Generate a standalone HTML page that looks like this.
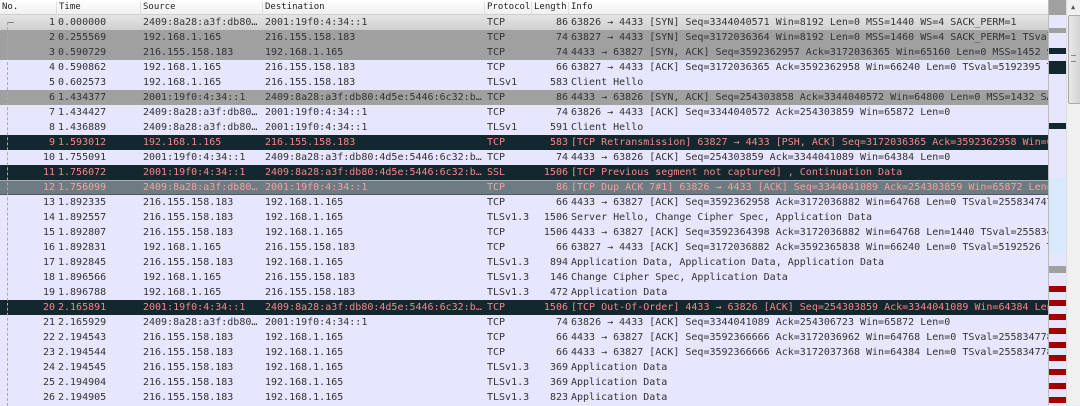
<!DOCTYPE html><html><head><style>
body{margin:0;width:1080px;height:405px;overflow:hidden;background:#e7e6ff;font-family:"DejaVu Sans Mono","Liberation Mono",monospace;font-size:10px;color:#333;position:relative}
.h{position:absolute;left:0;top:0;width:1048px;height:15px;background:linear-gradient(#fff,#f0f0f0);border-bottom:1px solid #d0d0d0;box-sizing:border-box;font-family:"DejaVu Sans Mono",monospace;font-size:9px;color:#222}
.h span{position:absolute;top:2px;border-left:1px solid #ddd;padding-left:2px;height:13px}
.r{position:absolute;left:0;width:1048px;height:15px;line-height:15px;white-space:pre;overflow:hidden}
.r span{position:absolute;top:0}
.n{right:993px;text-align:right}
.t{left:58px}.s{left:143px}.d{left:265px}.p{left:487px}.l{right:480px;text-align:right}.i{left:571px}
.g{background:#a0a0a0}.w{background:linear-gradient(#e4e4e4,#d0d0d0)}
.k{background:#12272e;color:#f78787}.m{background:#6c7c82;color:#f5a0a0;border-top:1px solid #aab;border-bottom:1px solid #556}
.mm{position:absolute;left:1048px;top:0;width:18px;height:405px;background:#e7e6ff;border-left:1px solid #bbb}
.mm div{position:absolute;left:0;width:18px}
.sb{position:absolute;left:1066px;top:0;width:14px;height:405px;background:#f0f0f0;border-left:1px solid #ddd}
</style></head><body>
<div class="h"><span style="left:0;border:0">No.</span><span style="left:56px">Time</span><span style="left:140px">Source</span><span style="left:262px">Destination</span><span style="left:484px">Protocol</span><span style="left:531px">Length</span><span style="left:568px">Info</span></div>
<div class="r w" style="top:15px"><span class="n">1</span><span class="t">0.000000</span><span class="s">2409:8a28:a3f:db80…</span><span class="d">2001:19f0:4:34::1</span><span class="p">TCP</span><span class="l">86</span><span class="i">63826 → 4433 [SYN] Seq=3344040571 Win=8192 Len=0 MSS=1440 WS=4 SACK_PERM=1</span></div>
<div class="r g" style="top:30px"><span class="n">2</span><span class="t">0.255569</span><span class="s">192.168.1.165</span><span class="d">216.155.158.183</span><span class="p">TCP</span><span class="l">74</span><span class="i">63827 → 4433 [SYN] Seq=3172036364 Win=8192 Len=0 MSS=1460 WS=4 SACK_PERM=1 TSval=</span></div>
<div class="r g" style="top:45px"><span class="n">3</span><span class="t">0.590729</span><span class="s">216.155.158.183</span><span class="d">192.168.1.165</span><span class="p">TCP</span><span class="l">74</span><span class="i">4433 → 63827 [SYN, ACK] Seq=3592362957 Ack=3172036365 Win=65160 Len=0 MSS=1452 SA</span></div>
<div class="r" style="top:60px"><span class="n">4</span><span class="t">0.590862</span><span class="s">192.168.1.165</span><span class="d">216.155.158.183</span><span class="p">TCP</span><span class="l">66</span><span class="i">63827 → 4433 [ACK] Seq=3172036365 Ack=3592362958 Win=66240 Len=0 TSval=5192395 TS</span></div>
<div class="r" style="top:75px"><span class="n">5</span><span class="t">0.602573</span><span class="s">192.168.1.165</span><span class="d">216.155.158.183</span><span class="p">TLSv1</span><span class="l">583</span><span class="i">Client Hello</span></div>
<div class="r g" style="top:90px"><span class="n">6</span><span class="t">1.434377</span><span class="s">2001:19f0:4:34::1</span><span class="d">2409:8a28:a3f:db80:4d5e:5446:6c32:b…</span><span class="p">TCP</span><span class="l">86</span><span class="i">4433 → 63826 [SYN, ACK] Seq=254303858 Ack=3344040572 Win=64800 Len=0 MSS=1432 SA</span></div>
<div class="r" style="top:105px"><span class="n">7</span><span class="t">1.434427</span><span class="s">2409:8a28:a3f:db80…</span><span class="d">2001:19f0:4:34::1</span><span class="p">TCP</span><span class="l">74</span><span class="i">63826 → 4433 [ACK] Seq=3344040572 Ack=254303859 Win=65872 Len=0</span></div>
<div class="r" style="top:120px"><span class="n">8</span><span class="t">1.436889</span><span class="s">2409:8a28:a3f:db80…</span><span class="d">2001:19f0:4:34::1</span><span class="p">TLSv1</span><span class="l">591</span><span class="i">Client Hello</span></div>
<div class="r k" style="top:135px"><span class="n">9</span><span class="t">1.593012</span><span class="s">192.168.1.165</span><span class="d">216.155.158.183</span><span class="p">TCP</span><span class="l">583</span><span class="i">[TCP Retransmission] 63827 → 4433 [PSH, ACK] Seq=3172036365 Ack=3592362958 Win=6</span></div>
<div class="r" style="top:150px"><span class="n">10</span><span class="t">1.755091</span><span class="s">2001:19f0:4:34::1</span><span class="d">2409:8a28:a3f:db80:4d5e:5446:6c32:b…</span><span class="p">TCP</span><span class="l">74</span><span class="i">4433 → 63826 [ACK] Seq=254303859 Ack=3344041089 Win=64384 Len=0</span></div>
<div class="r k" style="top:165px"><span class="n">11</span><span class="t">1.756072</span><span class="s">2001:19f0:4:34::1</span><span class="d">2409:8a28:a3f:db80:4d5e:5446:6c32:b…</span><span class="p">SSL</span><span class="l">1506</span><span class="i">[TCP Previous segment not captured] , Continuation Data</span></div>
<div class="r m" style="top:180px;height:13px;line-height:13px"><span class="n">12</span><span class="t">1.756099</span><span class="s">2409:8a28:a3f:db80…</span><span class="d">2001:19f0:4:34::1</span><span class="p">TCP</span><span class="l">86</span><span class="i">[TCP Dup ACK 7#1] 63826 → 4433 [ACK] Seq=3344041089 Ack=254303859 Win=65872 Len=</span></div>
<div class="r" style="top:195px"><span class="n">13</span><span class="t">1.892335</span><span class="s">216.155.158.183</span><span class="d">192.168.1.165</span><span class="p">TCP</span><span class="l">66</span><span class="i">4433 → 63827 [ACK] Seq=3592362958 Ack=3172036882 Win=64768 Len=0 TSval=255834747</span></div>
<div class="r" style="top:210px"><span class="n">14</span><span class="t">1.892557</span><span class="s">216.155.158.183</span><span class="d">192.168.1.165</span><span class="p">TLSv1.3</span><span class="l">1506</span><span class="i">Server Hello, Change Cipher Spec, Application Data</span></div>
<div class="r" style="top:225px"><span class="n">15</span><span class="t">1.892807</span><span class="s">216.155.158.183</span><span class="d">192.168.1.165</span><span class="p">TCP</span><span class="l">1506</span><span class="i">4433 → 63827 [ACK] Seq=3592364398 Ack=3172036882 Win=64768 Len=1440 TSval=255834</span></div>
<div class="r" style="top:240px"><span class="n">16</span><span class="t">1.892831</span><span class="s">192.168.1.165</span><span class="d">216.155.158.183</span><span class="p">TCP</span><span class="l">66</span><span class="i">63827 → 4433 [ACK] Seq=3172036882 Ack=3592365838 Win=66240 Len=0 TSval=5192526 T</span></div>
<div class="r" style="top:255px"><span class="n">17</span><span class="t">1.892845</span><span class="s">216.155.158.183</span><span class="d">192.168.1.165</span><span class="p">TLSv1.3</span><span class="l">894</span><span class="i">Application Data, Application Data, Application Data</span></div>
<div class="r" style="top:270px"><span class="n">18</span><span class="t">1.896566</span><span class="s">192.168.1.165</span><span class="d">216.155.158.183</span><span class="p">TLSv1.3</span><span class="l">146</span><span class="i">Change Cipher Spec, Application Data</span></div>
<div class="r" style="top:285px"><span class="n">19</span><span class="t">1.896788</span><span class="s">192.168.1.165</span><span class="d">216.155.158.183</span><span class="p">TLSv1.3</span><span class="l">472</span><span class="i">Application Data</span></div>
<div class="r k" style="top:300px"><span class="n">20</span><span class="t">2.165891</span><span class="s">2001:19f0:4:34::1</span><span class="d">2409:8a28:a3f:db80:4d5e:5446:6c32:b…</span><span class="p">TCP</span><span class="l">1506</span><span class="i">[TCP Out-Of-Order] 4433 → 63826 [ACK] Seq=254303859 Ack=3344041089 Win=64384 Len</span></div>
<div class="r" style="top:315px"><span class="n">21</span><span class="t">2.165929</span><span class="s">2409:8a28:a3f:db80…</span><span class="d">2001:19f0:4:34::1</span><span class="p">TCP</span><span class="l">74</span><span class="i">63826 → 4433 [ACK] Seq=3344041089 Ack=254306723 Win=65872 Len=0</span></div>
<div class="r" style="top:330px"><span class="n">22</span><span class="t">2.194543</span><span class="s">216.155.158.183</span><span class="d">192.168.1.165</span><span class="p">TCP</span><span class="l">66</span><span class="i">4433 → 63827 [ACK] Seq=3592366666 Ack=3172036962 Win=64768 Len=0 TSval=255834778</span></div>
<div class="r" style="top:345px"><span class="n">23</span><span class="t">2.194544</span><span class="s">216.155.158.183</span><span class="d">192.168.1.165</span><span class="p">TCP</span><span class="l">66</span><span class="i">4433 → 63827 [ACK] Seq=3592366666 Ack=3172037368 Win=64384 Len=0 TSval=255834778</span></div>
<div class="r" style="top:360px"><span class="n">24</span><span class="t">2.194545</span><span class="s">216.155.158.183</span><span class="d">192.168.1.165</span><span class="p">TLSv1.3</span><span class="l">369</span><span class="i">Application Data</span></div>
<div class="r" style="top:375px"><span class="n">25</span><span class="t">2.194904</span><span class="s">216.155.158.183</span><span class="d">192.168.1.165</span><span class="p">TLSv1.3</span><span class="l">369</span><span class="i">Application Data</span></div>
<div class="r" style="top:390px"><span class="n">26</span><span class="t">2.194905</span><span class="s">216.155.158.183</span><span class="d">192.168.1.165</span><span class="p">TLSv1.3</span><span class="l">823</span><span class="i">Application Data</span></div>
<div style="position:absolute;left:7px;top:22px;width:6px;height:383px;border-left:1px dashed #aaa;border-top:1px solid #888"></div>
<div class="mm">
<div style="top:0;height:15px;background:#a0a0a0"></div>
<div style="top:28px;height:5px;background:#a0a0a0"></div>
<div style="top:48px;height:6px;background:#12272e"></div>
<div style="top:61px;height:13px;background:#12272e"></div>
<div style="top:123px;height:6px;background:#12272e"></div>
<div style="top:178px;height:75px;background:#d8e8ff"></div>
<div style="top:266px;height:7px;background:#a0a0a0"></div>
<div style="top:286px;height:6px;background:#a00000"></div>
<div style="top:300px;height:6px;background:#a00000"></div>
<div style="top:314px;height:6px;background:#a00000"></div>
<div style="top:328px;height:6px;background:#a00000"></div>
<div style="top:342px;height:6px;background:#a00000"></div>
<div style="top:355px;height:6px;background:#a00000"></div>
<div style="top:369px;height:6px;background:#a00000"></div>
<div style="top:383px;height:6px;background:#a00000"></div>
<div style="top:397px;height:6px;background:#a00000"></div>
</div>
<div class="sb"><div style="position:absolute;top:3px;left:4px;font-size:7px;color:#555">▲</div>
<div style="position:absolute;top:15px;left:1px;width:11px;height:87px;background:linear-gradient(90deg,#e8e8e8,#d4d4d4);border:1px solid #aaa;border-radius:2px"></div>
<div style="position:absolute;top:55px;left:4px;width:5px;height:5px;border-top:1px solid #888;border-bottom:1px solid #888"></div></div>
</body></html>
